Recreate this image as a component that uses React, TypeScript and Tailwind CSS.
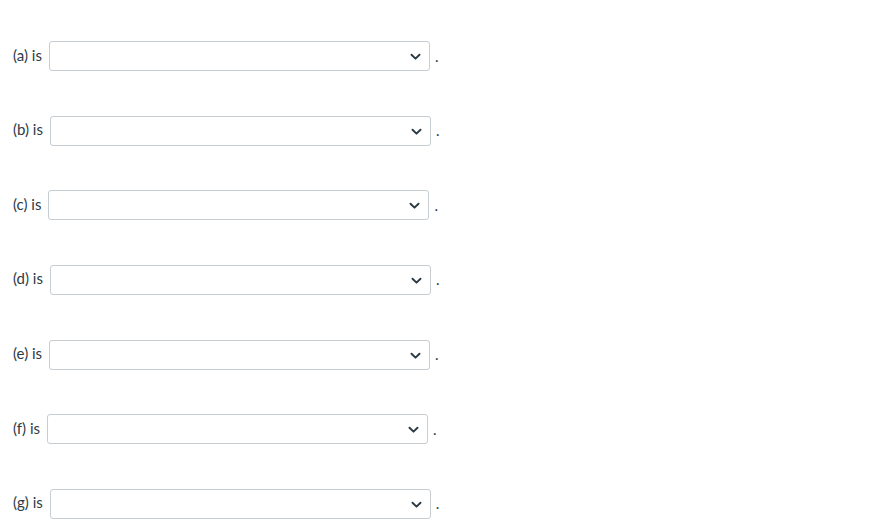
import React from "react";

const labels = ["a", "b", "c", "d", "e", "f", "g"];

function Row({ l }: { l: string }) {
  return (
    <div className="flex items-center h-[30px]">
      <span className="text-[15px] text-[#2d3b45] mr-[7px] leading-none relative top-[-1px]">({l}) is</span>
      <div className="relative w-[381px] h-[30px] border border-[#c7cdd1] rounded-[3px] bg-white">
        <svg
          className="absolute right-[8px] top-[11px]"
          width="11"
          height="8"
          viewBox="0 0 11 8"
          fill="none"
        >
          <path d="M1.5 1.8 L5.5 5.6 L9.5 1.8" stroke="#2d3b45" strokeWidth="2" strokeLinecap="round" strokeLinejoin="round" />
        </svg>
      </div>
      <span className="ml-[5px] text-[15px] text-[#2d3b45] leading-none">.</span>
    </div>
  );
}

export default function App() {
  return (
    <div
      className="w-[878px] h-[530px] bg-white pl-[13px] pt-[41px] flex flex-col gap-[44.67px]"
      style={{ fontFamily: "Lato, 'Helvetica Neue', Arial, sans-serif" }}
    >
      {labels.map((l) => (
        <Row key={l} l={l} />
      ))}
    </div>
  );
}
